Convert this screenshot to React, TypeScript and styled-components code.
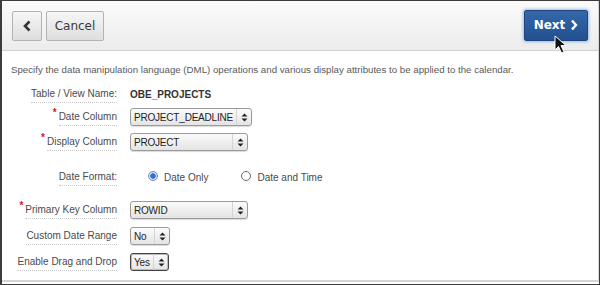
import React from "react";
import styled, { createGlobalStyle } from "styled-components";

const Global = createGlobalStyle`
  html, body { margin: 0; padding: 0; background: #fff; }
  body { font-family: "Liberation Sans", Arial, sans-serif; }
`;

const Frame = styled.div`
  position: relative;
  width: 600px;
  height: 285px;
  box-sizing: border-box;
  border: 1px solid #3c3c3c;
  border-left-width: 2px;
  background: #fff;
  overflow: hidden;
`;

const Panel = styled.div`
  height: 281px;
  box-sizing: border-box;
  border-bottom: 2px solid #d6d6d6;
  border-right: 1px solid #d6d6d6;
  display: flex;
  flex-direction: column;
`;

const Header = styled.div`
  height: 49px;
  flex: none;
  display: flex;
  align-items: center;
  padding: 0 10px 0 10px;
  background: linear-gradient(#fbfbfb, #ececec);
  border-bottom: 1px solid #cfcfcf;
`;

const Button = styled.div<{ $w: number }>`
  width: ${(p) => p.$w}px;
  height: 30px;
  box-sizing: border-box;
  display: flex;
  align-items: center;
  justify-content: center;
  border: 1px solid #b3b3b3;
  border-radius: 2px;
  background: linear-gradient(#f6f6f6, #dedede);
  color: #3a3a3a;
  font-family: "DejaVu Sans", sans-serif;
  font-size: 12px;
  & + & { margin-left: 4px; }
`;

const Spacer = styled.div`
  flex: 1;
`;

const NextButton = styled.div`
  width: 64px;
  height: 31px;
  box-sizing: border-box;
  display: flex;
  align-items: center;
  justify-content: center;
  gap: 5px;
  border: 1px solid #1d4683;
  border-radius: 2px;
  background: linear-gradient(#3468aa, #22508f);
  box-shadow: 0 0 3px 1px rgba(90, 140, 210, 0.55);
  color: #fff;
  font-family: "DejaVu Sans", sans-serif;
  font-weight: bold;
  font-size: 12px;
  margin-top: -1px;
`;

const Description = styled.div`
  padding: 13px 0 0 9px;
  height: 31px;
  box-sizing: border-box;
  font-size: 9.7px;
  color: #5a5a5a;
  line-height: 12px;
`;

const Form = styled.div`
  display: flex;
  flex-direction: column;
  padding-top: 1px;
`;

const Row = styled.div<{ $h: number }>`
  height: ${(p) => p.$h}px;
  display: grid;
  grid-template-columns: 115px 1fr;
  column-gap: 13px;
  align-items: center;
`;

const LabelCell = styled.div`
  display: flex;
  justify-content: flex-end;
  align-items: flex-start;
  margin-top: 3px;
`;

const Label = styled.span`
  font-size: 10px;
  color: #4a4a4a;
  padding-bottom: 2px;
  border-bottom: 1px dotted #c8c8c8;
  line-height: 12px;
`;

const Req = styled.span`
  color: #d0181f;
  font-size: 10px;
  font-weight: bold;
  margin-right: 2px;
  margin-top: -4px;
`;

const Value = styled.span`
  font-size: 10px;
  font-weight: bold;
  color: #333;
  margin-top: 1px;
`;

const Select = styled.div<{ $w: number; $focus?: boolean }>`
  width: ${(p) => p.$w}px;
  height: 18px;
  box-sizing: border-box;
  display: flex;
  align-items: center;
  border: 1px solid ${(p) => (p.$focus ? "#444" : "#9a9a9a")};
  box-shadow: ${(p) => (p.$focus ? "inset 0 0 0 1px #bbb" : "0 1px 1px rgba(0,0,0,0.15)")};
  border-radius: 3px;
  background: linear-gradient(#fbfbfb, #e4e4e4);
  font-size: 10px;
  letter-spacing: -0.2px;
  color: #1e1e1e;
`;

const SelectText = styled.span`
  flex: 1;
  padding-left: 3px;
  white-space: nowrap;
  overflow: hidden;
`;

const Arrows = styled.span`
  width: 14px;
  flex: none;
  height: 100%;
  display: flex;
  align-items: center;
  justify-content: center;
  border-left: 1px solid #d4d4d4;
`;

const RadioGroup = styled.div`
  display: flex;
  align-items: center;
  padding-left: 18px;
  margin-top: 1px;
`;

const RadioOption = styled.label`
  display: flex;
  align-items: center;
  font-size: 10px;
  color: #4a4a4a;
  & + & { margin-left: 33px; }
`;

const RadioDot = styled.span<{ $on?: boolean }>`
  width: 10px;
  height: 10px;
  border-radius: 50%;
  box-sizing: border-box;
  border: 1px solid ${(p) => (p.$on ? "#6f8fb8" : "#6a6a6a")};
  background: ${(p) =>
    p.$on ? "radial-gradient(circle, #2f6fd0 0 2.4px, #cfe0f6 3px)" : "#fff"};
  margin-right: 6px;
  margin-top: -4px;
`;

const Cursor = styled.svg`
  position: absolute;
  left: 552px;
  top: 34px;
`;

const UpDown = () => (
  <svg width="7" height="9" viewBox="0 0 7 9">
    <path d="M3.5 0.5 L6.5 3.5 L0.5 3.5 Z M3.5 8.5 L6.5 5.5 L0.5 5.5 Z" fill="#222" />
  </svg>
);

const Sel = ({ w, text, focus }: { w: number; text: string; focus?: boolean }) => (
  <div>
    <Select $w={w} $focus={focus}>
      <SelectText>{text}</SelectText>
      <Arrows>
        <UpDown />
      </Arrows>
    </Select>
  </div>
);

export default function App() {
  return (
    <>
      <Global />
      <Frame>
        <Panel>
          <Header>
            <Button $w={30}>
              <svg width="10" height="12" viewBox="0 0 10 12">
                <path d="M7.5 1.5 L3 6 L7.5 10.5" fill="none" stroke="#333" strokeWidth="2.6" />
              </svg>
            </Button>
            <Button $w={58}>Cancel</Button>
            <Spacer />
            <NextButton>
              Next
              <svg width="8" height="12" viewBox="0 0 8 12">
                <path d="M2 1.5 L6 6 L2 10.5" fill="none" stroke="#fff" strokeWidth="2.4" />
              </svg>
            </NextButton>
          </Header>
          <Description>
            Specify the data manipulation language (DML) operations and various display attributes to be applied to the calendar.
          </Description>
          <Form>
            <Row $h={22}>
              <LabelCell>
                <Label>Table / View Name:</Label>
              </LabelCell>
              <Value>OBE_PROJECTS</Value>
            </Row>
            <Row $h={24}>
              <LabelCell>
                <Req>*</Req>
                <Label>Date Column</Label>
              </LabelCell>
              <Sel w={122} text="PROJECT_DEADLINE" />
            </Row>
            <Row $h={26}>
              <LabelCell>
                <Req>*</Req>
                <Label>Display Column</Label>
              </LabelCell>
              <Sel w={118} text="PROJECT" />
            </Row>
            <Row $h={44}>
              <LabelCell>
                <Label>Date Format:</Label>
              </LabelCell>
              <RadioGroup>
                <RadioOption>
                  <RadioDot $on />
                  Date Only
                </RadioOption>
                <RadioOption>
                  <RadioDot />
                  Date and Time
                </RadioOption>
              </RadioGroup>
            </Row>
            <Row $h={22}>
              <LabelCell>
                <Req>*</Req>
                <Label>Primary Key Column</Label>
              </LabelCell>
              <Sel w={118} text="ROWID" />
            </Row>
            <Row $h={30}>
              <LabelCell>
                <Label>Custom Date Range</Label>
              </LabelCell>
              <Sel w={40} text="No" />
            </Row>
            <Row $h={22}>
              <LabelCell>
                <Label>Enable Drag and Drop</Label>
              </LabelCell>
              <Sel w={39} text="Yes" focus />
            </Row>
          </Form>
        </Panel>
        <Cursor width="16" height="20" viewBox="0 0 16 20">
          <path d="M1 1 L1 15 L4.5 11.5 L7.5 18 L10 17 L7 10.5 L12 10.5 Z" fill="#111" stroke="#fff" strokeWidth="1" />
        </Cursor>
      </Frame>
    </>
  );
}
